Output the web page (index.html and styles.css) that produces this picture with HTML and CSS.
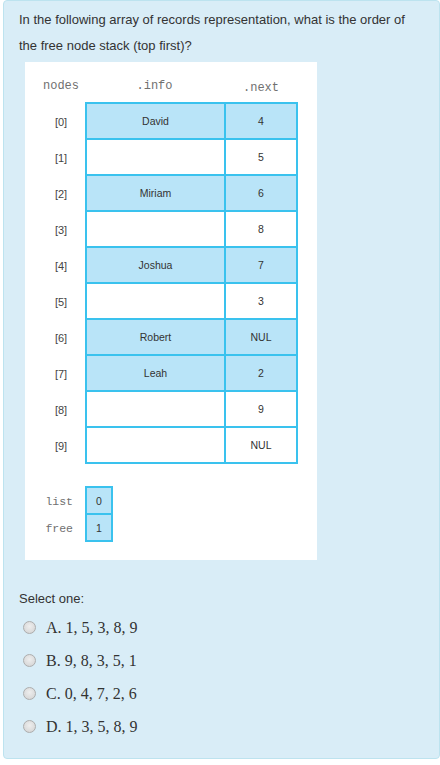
FILE: index.html
```html
<!DOCTYPE html>
<html>
<head>
<meta charset="utf-8">
<link rel="stylesheet" href="styles.css">
</head>
<body>
<div class="que">
  <p class="qtext">In the following array of records representation, what is the order of the free node stack (top first)?</p>
  <div class="figure">
    <div class="head">
      <span class="h-nodes">nodes</span>
      <span class="h-info">.info</span>
      <span class="h-next">.next</span>
    </div>
    <div class="arr">
      <div class="idx">
        <span>[0]</span><span>[1]</span><span>[2]</span><span>[3]</span><span>[4]</span>
        <span>[5]</span><span>[6]</span><span>[7]</span><span>[8]</span><span>[9]</span>
      </div>
      <div class="grid">
        <div class="c on">David</div><div class="c on">4</div>
        <div class="c"></div><div class="c">5</div>
        <div class="c on">Miriam</div><div class="c on">6</div>
        <div class="c"></div><div class="c">8</div>
        <div class="c on">Joshua</div><div class="c on">7</div>
        <div class="c"></div><div class="c">3</div>
        <div class="c on">Robert</div><div class="c on">NUL</div>
        <div class="c on">Leah</div><div class="c on">2</div>
        <div class="c"></div><div class="c">9</div>
        <div class="c"></div><div class="c">NUL</div>
      </div>
    </div>
    <div class="ptrs">
      <div class="plabels"><span>list</span><span>free</span></div>
      <div class="pbox"><div class="pc">0</div><div class="pc">1</div></div>
    </div>
  </div>
  <div class="prompt">Select one:</div>
  <div class="answers">
    <label class="opt"><span class="radio"></span><span class="atext">A. 1, 5, 3, 8, 9</span></label>
    <label class="opt"><span class="radio"></span><span class="atext">B. 9, 8, 3, 5, 1</span></label>
    <label class="opt"><span class="radio"></span><span class="atext">C. 0, 4, 7, 2, 6</span></label>
    <label class="opt"><span class="radio"></span><span class="atext">D. 1, 3, 5, 8, 9</span></label>
  </div>
</div>
</body>
</html>
```

FILE: styles.css
```css
html, body {
  margin: 0;
  padding: 0;
  background: #ffffff;
}

body {
  font-family: "Liberation Sans", Arial, sans-serif;
  color: #333333;
}

.que {
  margin-left: 3px;
  width: 437px;
  height: 759px;
  box-sizing: border-box;
  background: #d9edf7;
  border: 1px solid #bde3ef;
  border-radius: 4px;
  padding: 6px 0 0 15px;
}

.qtext {
  margin: 0;
  font-size: 13px;
  line-height: 26px;
  color: #333333;
  width: 395px;
}

.figure {
  margin: 3px 0 0 6px;
  width: 292px;
  height: 498px;
  box-sizing: border-box;
  background: #ffffff;
  padding: 16px 0 0 12px;
}

.head {
  display: flex;
  height: 16px;
  align-items: center;
  font-family: "Liberation Mono", "Courier New", monospace;
  font-size: 12px;
  color: #707070;
  margin-bottom: 8px;
}

.h-nodes {
  width: 48px;
  text-align: center;
}

.h-info {
  width: 139px;
  text-align: center;
}

.h-next {
  width: 74px;
  text-align: center;
  padding-top: 3px;
}

.arr {
  display: flex;
}

.idx {
  width: 48px;
  display: flex;
  flex-direction: column;
  padding-top: 2px;
}

.idx span {
  height: 36px;
  display: flex;
  align-items: center;
  justify-content: center;
  font-size: 11px;
  color: #444444;
  font-family: "Liberation Sans Narrow", "Liberation Sans", Arial, sans-serif;
}

.grid {
  display: grid;
  grid-template-columns: 137px 70px;
  grid-auto-rows: 34px;
  gap: 2px;
  padding: 2px;
  background: #3ac2ee;
}

.c {
  background: #ffffff;
  display: flex;
  align-items: center;
  justify-content: center;
  font-size: 10.5px;
  color: #333333;
  font-family: "Liberation Sans Narrow", "Liberation Sans", Arial, sans-serif;
}

.c.on {
  background: #b9e4f8;
}

.ptrs {
  display: flex;
  margin-top: 22px;
}

.plabels {
  width: 48px;
  display: flex;
  flex-direction: column;
  align-items: flex-end;
  padding-right: 12px;
  box-sizing: border-box;
  padding-top: 2px;
  font-family: "Liberation Mono", "Courier New", monospace;
  font-size: 11.5px;
  color: #707070;
}

.plabels span {
  height: 27px;
  display: flex;
  align-items: center;
}

.pbox {
  display: grid;
  grid-template-columns: 24px;
  grid-auto-rows: 25px;
  gap: 2px;
  padding: 2px;
  background: #3ac2ee;
}

.pc {
  background: #b9e4f8;
  display: flex;
  align-items: center;
  justify-content: center;
  font-size: 10.5px;
  color: #333333;
}

.prompt {
  margin-top: 29px;
  font-size: 13px;
  line-height: 20px;
  color: #333333;
}

.answers {
  margin-top: 2px;
  display: flex;
  flex-direction: column;
}

.opt {
  height: 33px;
  display: flex;
  align-items: center;
  padding-left: 4px;
}

.radio {
  width: 13px;
  height: 13px;
  box-sizing: border-box;
  border-radius: 50%;
  border: 1px solid #adadad;
  background: radial-gradient(circle at 50% 40%, #eeeeee 0%, #dadada 70%, #cccccc 100%);
  margin-right: 10px;
}

.atext {
  font-family: "Liberation Serif", "Times New Roman", serif;
  font-size: 16px;
  color: #333333;
}
```
